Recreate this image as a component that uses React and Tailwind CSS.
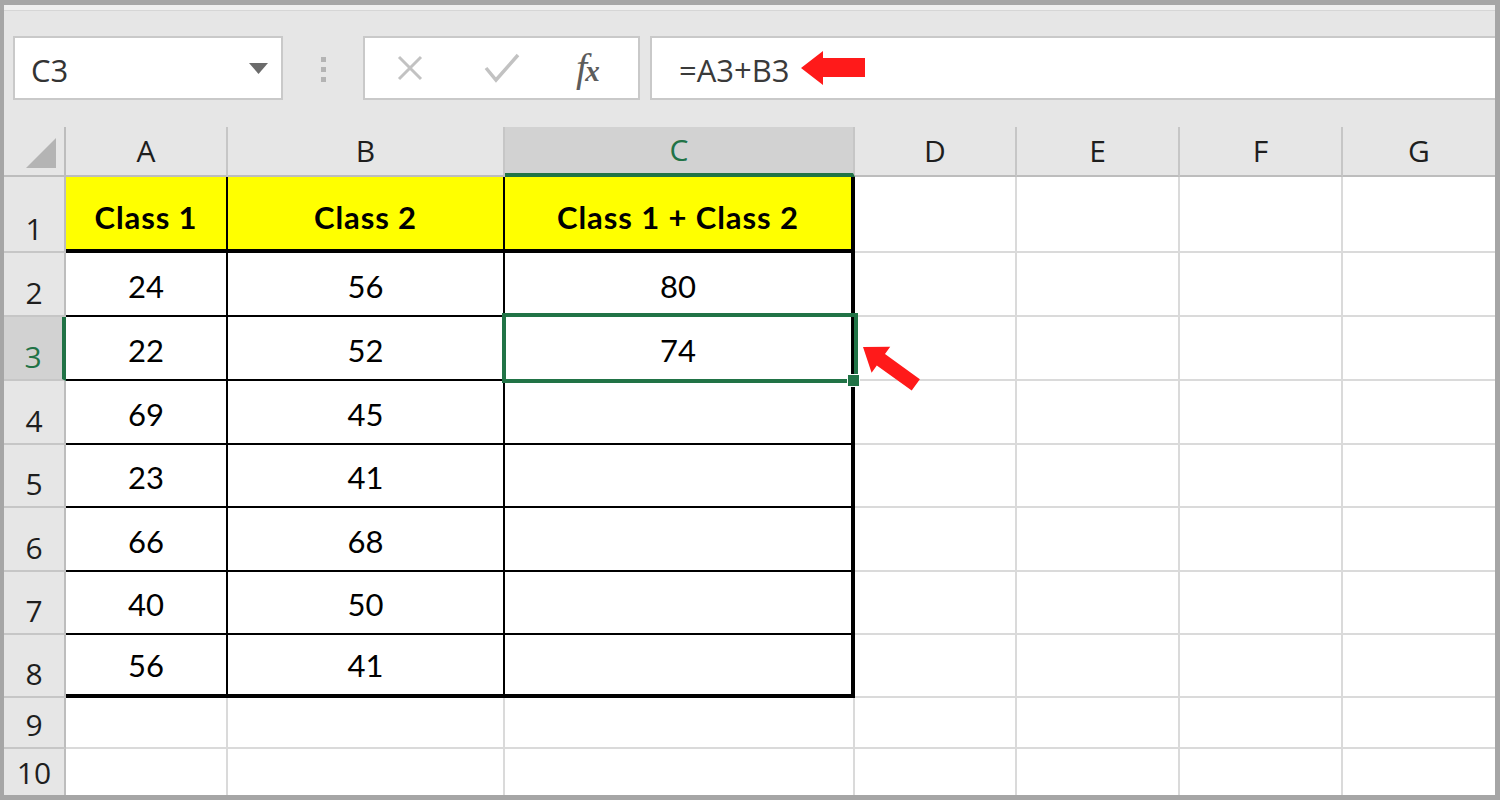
import clsx from 'clsx'

const COLS = ['A', 'B', 'C', 'D', 'E', 'F', 'G']

const DATA = [
  ['Class 1', 'Class 2', 'Class 1 + Class 2'],
  ['24', '56', '80'],
  ['22', '52', '74'],
  ['69', '45', ''],
  ['23', '41', ''],
  ['66', '68', ''],
  ['40', '50', ''],
  ['56', '41', ''],
]

const SEL_ROW = 3
const SEL_COL = 2
const ROWS = [1, 2, 3, 4, 5, 6, 7, 8, 9, 10]

function NameBox() {
  return (
    <div className="flex h-[64px] w-[270px] shrink-0 items-center justify-between border-2 border-[#c9c9c9] bg-white pl-[16px] pr-[13px] pt-[5px]">
      <span className="font-['Open_Sans',sans-serif] text-[31px] leading-none text-[#333]">C3</span>
      <svg width="19" height="11" viewBox="0 0 19 11" className="-mt-[5px]">
        <polygon points="0,0 19,0 9.5,11" fill="#6b6b6b" />
      </svg>
    </div>
  )
}

function FormulaButtons() {
  return (
    <div className="flex h-[64px] w-[277px] shrink-0 items-center border-2 border-[#c9c9c9] bg-white pl-[31px]">
      {/* cancel */}
      <svg width="28" height="28" viewBox="0 0 28 28">
        <path d="M3 3 L25 25 M25 3 L3 25" stroke="#c2c2c2" strokeWidth="3" fill="none" />
      </svg>
      {/* enter */}
      <svg width="36" height="30" viewBox="0 0 36 30" className="ml-[60px]">
        <path d="M2 15 L12 27 L34 2" stroke="#c2c2c2" strokeWidth="3.5" fill="none" />
      </svg>
      {/* insert function */}
      <div className="ml-[56px] flex items-baseline font-['Liberation_Serif',serif] italic leading-none text-[#5c5c5c]">
        <span className="text-[40px]">f</span>
        <span className="-ml-[2px] text-[29px] font-bold">x</span>
      </div>
    </div>
  )
}

function FormulaBar() {
  return (
    <div className="ml-[10px] flex h-[64px] flex-1 items-center border-2 border-r-0 border-[#c9c9c9] bg-white pl-[27px] pt-[5px]">
      <span className="font-['Open_Sans',sans-serif] text-[31px] leading-none text-[#3a3a3a]">=A3+B3</span>
      <svg width="64" height="34" viewBox="0 0 64 34" className="-mt-[5px] ml-[11px]">
        <polygon points="0,17 22,0 22,7 64,7 64,26 22,26 22,34" fill="#ff1a1a" />
      </svg>
    </div>
  )
}

function Toolbar() {
  return (
    <div className="flex h-[122px] shrink-0 flex-col bg-[#e6e6e6]">
      <div className="h-[6px] border-b border-[#d6d6d6] bg-[#efefef]" />
      <div className="flex items-start pl-[9px] pt-[25px]">
        <NameBox />
        <div className="flex w-[80px] shrink-0 flex-col items-center gap-[5px] self-center pt-[2px]">
          <div className="h-[5px] w-[5px] bg-[#b4b4b4]" />
          <div className="h-[5px] w-[5px] bg-[#b4b4b4]" />
          <div className="h-[5px] w-[5px] bg-[#b4b4b4]" />
        </div>
        <FormulaButtons />
        <FormulaBar />
      </div>
    </div>
  )
}

function Corner() {
  return (
    <div className="flex items-end justify-end border-r-2 border-b-2 border-[#bdbdbd] bg-[#e6e6e6] pb-[7px] pr-[8px]">
      <svg width="30" height="30" viewBox="0 0 30 30">
        <polygon points="30,0 30,30 0,30" fill="#b4b4b4" />
      </svg>
    </div>
  )
}

function ColHeader({ label, idx }) {
  const sel = idx === SEL_COL
  const last = idx === COLS.length - 1
  return (
    <div
      className={clsx(
        "flex items-center justify-center font-['Open_Sans',sans-serif] text-[30px] leading-none",
        sel
          ? 'border-b-4 border-b-[#217346] bg-[#d2d2d2] text-[#217346]'
          : 'border-b-2 border-b-[#bdbdbd] bg-[#e6e6e6] text-[#1e1e1e]',
        !last && 'border-r-2 border-r-[#c6c6c6]'
      )}
    >
      {label}
    </div>
  )
}

function RowHeader({ r }) {
  const sel = r === SEL_ROW
  return (
    <div
      className={clsx(
        "flex items-end justify-center pb-[7px] font-['Open_Sans',sans-serif] text-[30px] leading-none",
        sel
          ? 'border-r-4 border-r-[#217346] bg-[#d2d2d2] text-[#217346]'
          : 'border-r-2 border-r-[#bdbdbd] bg-[#e6e6e6] text-[#1e1e1e]',
        r < 10 && 'border-b-2 border-b-[#c6c6c6]'
      )}
    >
      {r}
    </div>
  )
}

function Cell({ r, c }) {
  const inTable = r <= 8 && c <= 2
  const value = inTable ? DATA[r - 1][c] : ''
  const isHead = inTable && r === 1
  const selected = r === SEL_ROW && c === SEL_COL

  return (
    <div
      className={clsx(
        "flex items-end justify-center font-['Lato',sans-serif] text-[31px] leading-none text-black",
        isHead ? 'bg-[#ffff00] pb-[16px] font-bold tracking-[0.9px]' : 'bg-white pb-[13px]',
        inTable && 'border-black',
        inTable && (r === 1 || r === 8 ? 'border-b-4' : 'border-b-2'),
        inTable && (c === 2 ? 'border-r-4' : 'border-r-2'),
        !inTable && 'border-[#dadada]',
        !inTable && r < 10 && 'border-b-2',
        !inTable && c < 6 && 'border-r-2',
        selected && 'relative'
      )}
    >
      {value}
      {selected && (
        <>
          <div className="pointer-events-none absolute -left-[3px] -top-[4px] z-10 h-[70px] w-[356px] border-4 border-[#217346]" />
          <div className="absolute left-[342px] top-[57px] z-20 h-[13px] w-[13px] border border-white bg-[#217346]" />
          <svg width="62" height="48" viewBox="0 0 62 48" className="absolute left-[356px] top-[28px] z-20">
            <polygon
              points="2,2 29.2,1.8 24,9.1 58.9,34.2 50.7,45.6 15.8,20.5 10.6,27.8"
              fill="#ff1a1a"
            />
          </svg>
        </>
      )}
    </div>
  )
}

export default function App() {
  return (
    <div className="h-[800px] w-[1500px] bg-[#a6a6a6] pb-[5px] pl-[4px] pr-[5px] pt-[5px]">
      <div className="flex h-full flex-col overflow-hidden bg-white">
        <Toolbar />

        <div className="grid flex-1 grid-cols-[62px_162px_277px_350px_162px_163px_163px_1fr] grid-rows-[50px_76px_64px_64px_64px_63px_64px_63px_63px_51px_1fr]">
          <Corner />
          {COLS.map((l, i) => (
            <ColHeader key={l} label={l} idx={i} />
          ))}

          {ROWS.map((r) => (
            <div key={r} className="contents">
              <RowHeader r={r} />
              {COLS.map((l, c) => (
                <Cell key={l} r={r} c={c} />
              ))}
            </div>
          ))}
        </div>
      </div>
    </div>
  )
}
